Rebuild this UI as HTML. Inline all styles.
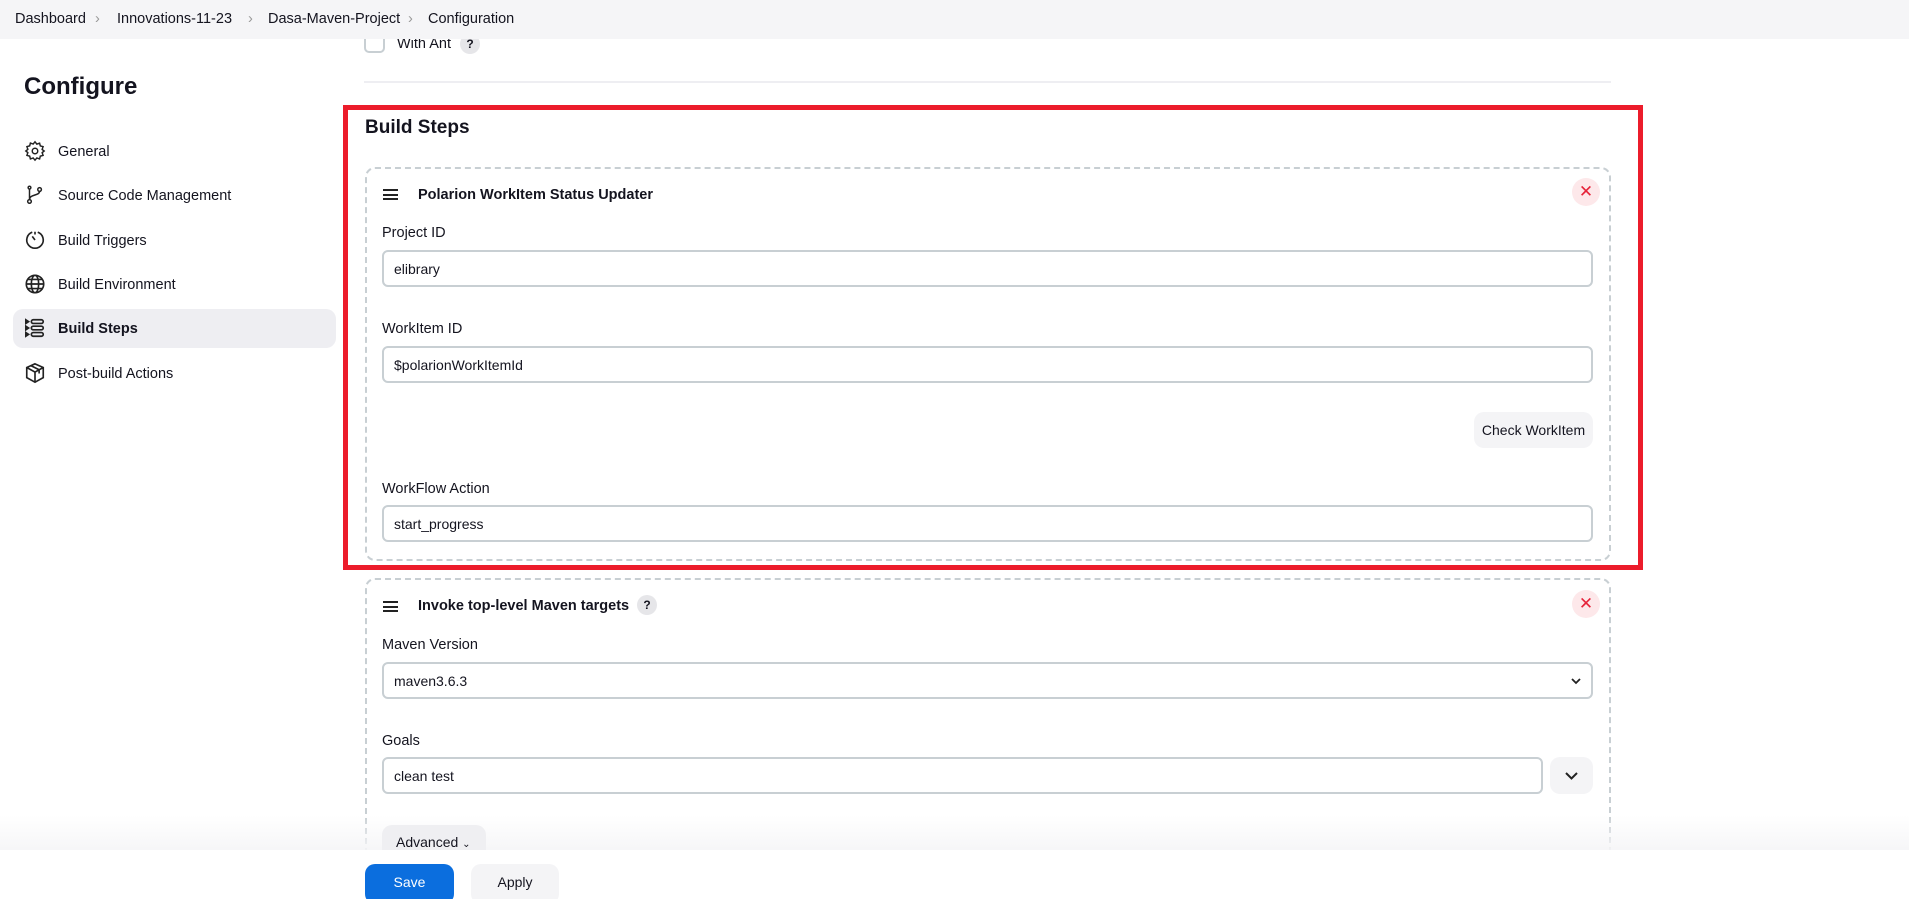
<!DOCTYPE html>
<html><head><meta charset="utf-8"><style>
*{box-sizing:border-box;margin:0;padding:0}
html,body{width:1909px;height:899px;overflow:hidden}
body{background:#fff;font-family:"Liberation Sans",sans-serif;color:#14141f;position:relative}
.abs{position:absolute}
.bc{left:0;top:0;width:1909px;height:39px;background:#f5f5f7;font-size:14.5px;z-index:5}
.bc span{position:absolute;top:11px}
.bc .sep{color:#999}
.side{font-size:14.5px}
.side .it{position:absolute;left:13px;width:323px;height:39px}
.side .it svg{position:absolute;left:11px;top:8px}
.side .it span{position:absolute;left:45px;top:12px}
.lbl{font-size:14.5px;position:absolute;left:382px}
.inp{position:absolute;left:382px;width:1211px;height:37px;border:2px solid #c8cfd3;border-radius:6px;font-size:14px;padding:9px 0 0 10px;background:#fff}
.card{position:absolute;left:365px;width:1246px;border:2px dashed #c8cfd3;border-radius:10px}
.ttl{position:absolute;font-weight:bold;font-size:14.5px}
.ham{position:absolute;width:15px;height:11px;border-top:2px solid #222;border-bottom:2px solid #222}
.ham:after{content:"";position:absolute;left:0;top:2.5px;width:15px;height:2px;background:#222}
.x{position:absolute;width:28px;height:28px;border-radius:50%;background:#fde8ea;color:#e6233a;font-size:17px;text-align:center;line-height:27px}
.btn{position:absolute;background:#f4f4f6;border-radius:10px;font-size:14px;text-align:center}
</style></head><body>
<div class="abs bc">
<span style="left:15px">Dashboard</span><span class="sep" style="left:95px">›</span>
<span style="left:117px">Innovations-11-23</span><span class="sep" style="left:248px">›</span>
<span style="left:268px">Dasa-Maven-Project</span><span class="sep" style="left:408px">›</span>
<span style="left:428px">Configuration</span>
</div>
<div class="abs" style="left:24px;top:73px;font-size:24px;font-weight:bold">Configure</div>
<div class="side">
<div class="it" style="top:132px"><svg width="22" height="22" viewBox="0 0 24 24" fill="none" stroke="#222" stroke-width="1.6"><circle cx="12" cy="12" r="3"/><path d="M12 2l2 2.5 3-1 .8 3 3 .8-1 3L22 12l-2.2 1.8 1 3-3 .8-.8 3-3-1L12 22l-2-2.4-3 1-.8-3-3-.8 1-3L2 12l2.2-1.8-1-3 3-.8.8-3 3 1z"/></svg><span>General</span></div>
<div class="it" style="top:176px"><svg width="22" height="22" viewBox="0 0 24 24" fill="none" stroke="#222" stroke-width="1.6"><circle cx="6" cy="19" r="2"/><circle cx="6" cy="4" r="1.5"/><circle cx="17" cy="6" r="2"/><path d="M6 5.5v11.5M17 8c0 5-11 3-11 9"/></svg><span>Source Code Management</span></div>
<div class="it" style="top:221px"><svg width="22" height="22" viewBox="0 0 24 24" fill="none" stroke="#222" stroke-width="1.8"><path d="M9 3.5A9 9 0 1 0 15 3.5"/><path d="M12 3v3M12 12l-3-4"/></svg><span>Build Triggers</span></div>
<div class="it" style="top:265px"><svg width="22" height="22" viewBox="0 0 24 24" fill="none" stroke="#222" stroke-width="1.8"><circle cx="12" cy="12" r="9.5"/><ellipse cx="12" cy="12" rx="4" ry="9.5"/><path d="M2.5 12h19M4 7h16M4 17h16"/></svg><span>Build Environment</span></div>
<div class="it" style="top:309px;background:#eeeef2;border-radius:10px"><svg width="22" height="22" viewBox="0 0 24 24" fill="none" stroke="#222" stroke-width="1.8"><rect x="8" y="3" width="13" height="4" rx="2"/><rect x="8" y="10" width="13" height="4" rx="2"/><rect x="8" y="17" width="13" height="4" rx="2"/><path d="M2 3l3 2-3 2zM2 10l3 2-3 2zM2 17l3 2-3 2z" fill="#222"/></svg><span style="font-weight:bold">Build Steps</span></div>
<div class="it" style="top:354px"><svg width="22" height="22" viewBox="0 0 24 24" fill="none" stroke="#222" stroke-width="1.8"><path d="M12 2l9 4v11l-9 5-9-5V6z"/><path d="M3 6l9 5 9-5M12 11v11M7.5 4l9 4.5v4"/></svg><span>Post-build Actions</span></div>
</div>
<div class="abs" style="left:364px;top:32px;width:21px;height:21px;border:2px solid #c8cfd3;border-radius:5px"></div>
<div class="abs" style="left:397px;top:36px;font-size:14.5px">With Ant</div>
<div class="abs" style="left:460px;top:34px;width:20px;height:20px;border-radius:50%;background:#e6e6e9;font-size:12px;font-weight:bold;text-align:center;line-height:20px">?</div>
<div class="abs" style="left:364px;top:81px;width:1247px;height:2px;background:#eeeef2"></div>

<div class="abs" style="left:343px;top:105px;width:1300px;height:465px;border:5px solid #ec1c2b"></div>
<div class="abs" style="left:365px;top:117px;font-size:19px;font-weight:bold">Build Steps</div>

<div class="card" style="top:167px;height:394px"></div>
<div class="ham" style="left:383px;top:189px"></div>
<div class="ttl" style="left:418px;top:187px">Polarion WorkItem Status Updater</div>
<div class="x" style="left:1572px;top:178px">✕</div>
<div class="lbl" style="top:225px">Project ID</div>
<div class="inp" style="top:250px">elibrary</div>
<div class="lbl" style="top:321px">WorkItem ID</div>
<div class="inp" style="top:346px">$polarionWorkItemId</div>
<div class="btn" style="left:1474px;top:412px;width:119px;height:36px;line-height:36px">Check WorkItem</div>
<div class="lbl" style="top:481px">WorkFlow Action</div>
<div class="inp" style="top:505px">start_progress</div>

<div class="card" style="top:578px;height:340px"></div>
<div class="ham" style="left:383px;top:601px"></div>
<div class="ttl" style="left:418px;top:598px">Invoke top-level Maven targets</div>
<div class="abs" style="left:637px;top:595px;width:20px;height:20px;border-radius:50%;background:#e6e6e9;font-size:12px;font-weight:bold;text-align:center;line-height:20px">?</div>
<div class="x" style="left:1572px;top:590px">✕</div>
<div class="lbl" style="top:637px">Maven Version</div>
<div class="inp" style="top:662px">maven3.6.3<svg class="abs" style="right:10px;top:14px" width="10" height="7" viewBox="0 0 10 7" fill="none" stroke="#222" stroke-width="1.8"><path d="M1 1l4 4 4-4"/></svg></div>
<div class="lbl" style="top:733px">Goals</div>
<div class="inp" style="top:757px;width:1161px">clean test</div>
<div class="btn" style="left:1550px;top:757px;width:43px;height:37px"><svg class="abs" style="left:15px;top:15px" width="13" height="8" viewBox="0 0 13 8" fill="none" stroke="#222" stroke-width="2"><path d="M1 1l5.5 5.5L12 1"/></svg></div>
<div class="abs" style="left:0;top:815px;width:1909px;height:35px;background:linear-gradient(rgba(245,245,247,0),rgba(245,245,247,.9))"></div>
<div class="btn" style="left:382px;top:825px;width:104px;height:34px;line-height:34px;text-align:left;padding-left:14px;background:#efeff2">Advanced <span style="font-size:10px">⌄</span></div>
<div class="abs" style="left:0;top:850px;width:1909px;height:49px;background:#fff"></div>
<div class="abs" style="left:365px;top:864px;width:89px;height:40px;background:#0b6ede;border-radius:10px;color:#fff;font-size:14px;text-align:center;line-height:36px">Save</div>
<div class="abs" style="left:471px;top:864px;width:88px;height:40px;background:#f4f4f6;border-radius:10px;font-size:14px;text-align:center;line-height:36px">Apply</div>
</body></html>
